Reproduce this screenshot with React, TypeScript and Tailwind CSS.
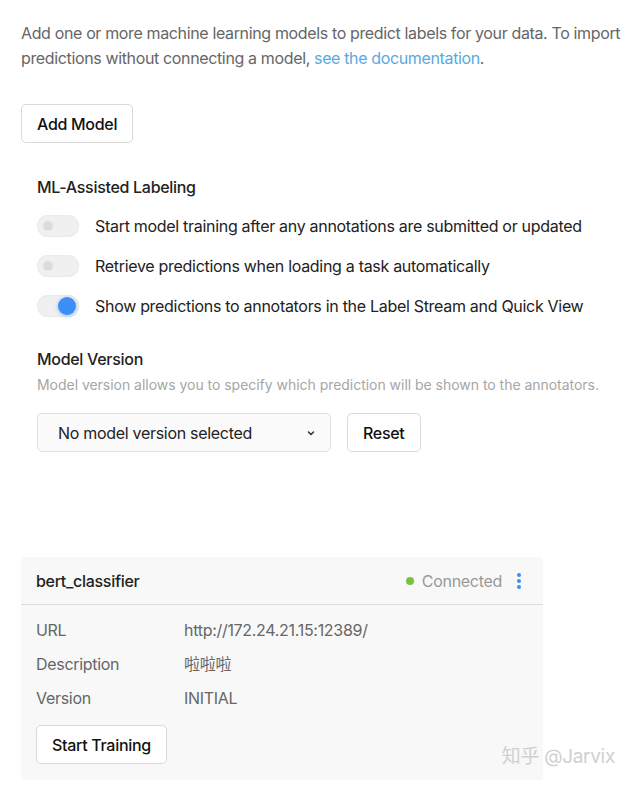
import React from "react";

const font = { fontFamily: "Inter, 'Noto Sans CJK SC', sans-serif", letterSpacing: "-0.3px" };

function Toggle({ on }: { on?: boolean }) {
  return (
    <div className="relative h-[22px] w-[42px] shrink-0 rounded-full bg-[#f0f0f0] shadow-[inset_0_0_0_1px_#ebebeb]">
      {on ? (
        <div className="absolute right-[3px] top-[2px] h-[18px] w-[18px] rounded-full bg-[#3b8ff6] shadow-[0_1px_4px_rgba(59,143,246,0.5)]" />
      ) : (
        <div className="absolute left-[6px] top-[6px] h-[10px] w-[10px] rounded-full bg-[#dcdcdc]" />
      )}
    </div>
  );
}

export default function App() {
  return (
    <div className="relative min-h-[785px] w-[629px] overflow-hidden bg-white" style={font}>
      <div className="pl-[21px] pt-[21px]">
        <p className="w-[608px] whitespace-nowrap text-[16px] leading-[25px] tracking-[-0.36px] text-[#666]">
          Add one or more machine learning models to predict labels for your data. To import
          <br />
          predictions without connecting a model, <a className="text-[#5aa9e0]">see the documentation</a>.
        </p>

        <button className="mt-[33px] h-[39px] rounded-[5px] border border-[#d9d9d9] bg-white px-[15px] text-[16px] font-medium text-[#111]">
          Add Model
        </button>

        <div className="mt-[33px] pl-[16px]">
          <div className="text-[16px] font-medium leading-[22px] text-[#222]">ML-Assisted Labeling</div>
          <div className="mt-[17px] flex flex-col gap-[18px]">
            {[
              ["Start model training after any annotations are submitted or updated", false],
              ["Retrieve predictions when loading a task automatically", false],
              ["Show predictions to annotators in the Label Stream and Quick View", true],
            ].map(([label, on]) => (
              <div key={label as string} className="flex items-center gap-[16px]">
                <Toggle on={on as boolean} />
                <span className="text-[16px] leading-[22px] text-[#222]">{label as string}</span>
              </div>
            ))}
          </div>

          <div className="mt-[31px] text-[16px] font-medium leading-[22px] text-[#222]">Model Version</div>
          <div className="mt-[5px] text-[14px] leading-[20px] tracking-[-0.03px] text-[#a6a6a6]">
            Model version allows you to specify which prediction will be shown to the annotators.
          </div>
          <div className="mt-[18px] flex gap-[16px]">
            <div className="flex h-[39px] w-[294px] items-center justify-between rounded-[5px] border border-[#e0e0e0] bg-[#fafafa] pl-[20px] pr-[14px]">
              <span className="text-[16px] text-[#222]">No model version selected</span>
              <svg width="10" height="10" viewBox="0 0 10 10" fill="none">
                <path d="M2.5 4 L5 6.5 L7.5 4" stroke="#333" strokeWidth="1.5" strokeLinecap="round" strokeLinejoin="round" />
              </svg>
            </div>
            <button className="h-[39px] rounded-[5px] border border-[#d9d9d9] bg-white px-[15px] text-[16px] font-medium text-[#111]">
              Reset
            </button>
          </div>
        </div>

        <div className="mt-[105px] w-[522px] rounded-[4px] bg-[#f8f8f8]">
          <div className="flex h-[48px] items-center justify-between border-b border-[#dcdcdc] pl-[15px] pr-[21px]">
            <span className="text-[16px] font-medium text-[#222]">bert_classifier</span>
            <div className="flex items-center">
              <span className="h-[8px] w-[8px] rounded-full bg-[#7ac143]" />
              <span className="ml-[8px] text-[16px] text-[#999]">Connected</span>
              <svg className="ml-[14px]" width="6" height="18" viewBox="0 0 6 18">
                <circle cx="3" cy="3" r="2" fill="#3b8ff6" />
                <circle cx="3" cy="9" r="2" fill="#3b8ff6" />
                <circle cx="3" cy="15" r="2" fill="#3b8ff6" />
              </svg>
            </div>
          </div>
          <div className="px-[15px] pb-[16px] pt-[14px]">
            <div className="flex flex-col gap-[12px] text-[16px] leading-[22px] text-[#666]">
              {[
                ["URL", "http://172.24.21.15:12389/"],
                ["Description", "啦啦啦"],
                ["Version", "INITIAL"],
              ].map(([k, v]) => (
                <div key={k} className="flex">
                  <span className="w-[148px]">{k}</span>
                  <span>{v}</span>
                </div>
              ))}
            </div>
            <button className="mt-[16px] h-[39px] rounded-[5px] border border-[#d9d9d9] bg-white px-[15px] text-[16px] font-medium text-[#111]">
              Start Training
            </button>
          </div>
        </div>
      </div>

      <div className="absolute bottom-[14px] right-[14px] text-[19px] text-[#d0d0d0]">知乎 @Jarvix</div>
    </div>
  );
}
